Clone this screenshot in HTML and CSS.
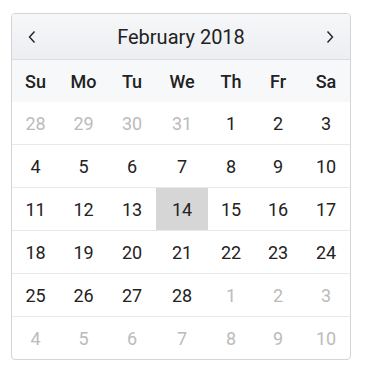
FILE: index.html
```html
<!DOCTYPE html>
<html lang="en">
<head>
  <meta charset="UTF-8">
  <meta name="viewport" content="width=device-width, initial-scale=1.0">
  <title>Date picker</title>
  <link rel="stylesheet" href="styles.css">
</head>

<body>
  <div class="calendar">
    <header class="cal-header">
      <button class="nav-btn" aria-label="Previous month">
        <svg width="10" height="14" viewBox="0 0 10 14"><polyline points="7.5,1.5 2.5,7 7.5,12.5" fill="none" stroke="#222" stroke-width="1.4"/></svg>
      </button>
      <h1 class="cal-title">February 2018</h1>
      <button class="nav-btn" aria-label="Next month">
        <svg width="10" height="14" viewBox="0 0 10 14"><polyline points="2.5,1.5 7.5,7 2.5,12.5" fill="none" stroke="#222" stroke-width="1.4"/></svg>
      </button>
    </header>

    <table class="cal-grid">
      <colgroup>
        <col class="col-su"><col class="col-mo"><col class="col-tu"><col class="col-we"><col class="col-th"><col class="col-fr"><col class="col-sa">
      </colgroup>
      <thead>
        <tr>
          <th>Su</th><th>Mo</th><th>Tu</th><th>We</th><th>Th</th><th>Fr</th><th>Sa</th>
        </tr>
      </thead>
      <tbody>
        <tr>
          <td class="muted">28</td><td class="muted">29</td><td class="muted">30</td><td class="muted">31</td><td>1</td><td>2</td><td>3</td>
        </tr>
        <tr>
          <td>4</td><td>5</td><td>6</td><td>7</td><td>8</td><td>9</td><td>10</td>
        </tr>
        <tr>
          <td>11</td><td>12</td><td>13</td><td class="selected">14</td><td>15</td><td>16</td><td>17</td>
        </tr>
        <tr>
          <td>18</td><td>19</td><td>20</td><td>21</td><td>22</td><td>23</td><td>24</td>
        </tr>
        <tr>
          <td>25</td><td>26</td><td>27</td><td>28</td><td class="muted">1</td><td class="muted">2</td><td class="muted">3</td>
        </tr>
        <tr>
          <td class="muted">4</td><td class="muted">5</td><td class="muted">6</td><td class="muted">7</td><td class="muted">8</td><td class="muted">9</td><td class="muted">10</td>
        </tr>
      </tbody>
    </table>
  </div>
</body>

</html>
```

FILE: styles.css
```css
:root {
  --text: #222222;
  --text-muted: #bbbbbb;
  --border: #d4d4d4;
  --row-line: #e9e9e9;
  --head-top: #f6f7f9;
  --head-bottom: #eceef1;
  --weekdays: #f7f8fa;
  --selected: #d6d6d6;
}

* {
  margin: 0;
  padding: 0;
  box-sizing: border-box;
}

body {
  background: #ffffff;
  font-family: Roboto, "Liberation Sans", sans-serif;
  color: var(--text);
  padding: 13px 17px 0 11px;
}

.calendar {
  width: 340px;
  border: 1px solid var(--border);
  border-radius: 4px;
  overflow: hidden;
}

.cal-header {
  display: flex;
  align-items: center;
  justify-content: space-between;
  height: 46px;
  padding: 0 14px 0 14px;
  background: linear-gradient(180deg, var(--head-top) 0%, var(--head-bottom) 100%);
  border-bottom: 1px solid #dcdde0;
}

.nav-btn {
  display: flex;
  align-items: center;
  justify-content: center;
  width: 12px;
  height: 24px;
  background: none;
  border: none;
  cursor: pointer;
}

.cal-title {
  font-size: 20px;
  font-weight: 400;
  line-height: 1;
  color: var(--text);
  padding-top: 1px;
}

.cal-grid {
  width: 100%;
  table-layout: fixed;
  border-collapse: collapse;
  font-size: 18px;
}

.col-su { width: 47px; }
.col-mo { width: 49px; }
.col-tu { width: 48px; }
.col-we { width: 52px; }
.col-th { width: 46px; }
.col-fr { width: 48px; }
.col-sa { width: 48px; }

.cal-grid th {
  height: 42px;
  background: var(--weekdays);
  font-weight: 500;
  color: var(--text);
  text-align: center;
}

.cal-grid td {
  height: 43px;
  text-align: center;
  border-top: 1px solid var(--row-line);
  padding-top: 1px;
}

.cal-grid tbody tr:first-child td {
  border-top: none;
  height: 42px;
}

.cal-grid td.muted {
  color: var(--text-muted);
}

.cal-grid td.selected {
  background: var(--selected);
}
```
